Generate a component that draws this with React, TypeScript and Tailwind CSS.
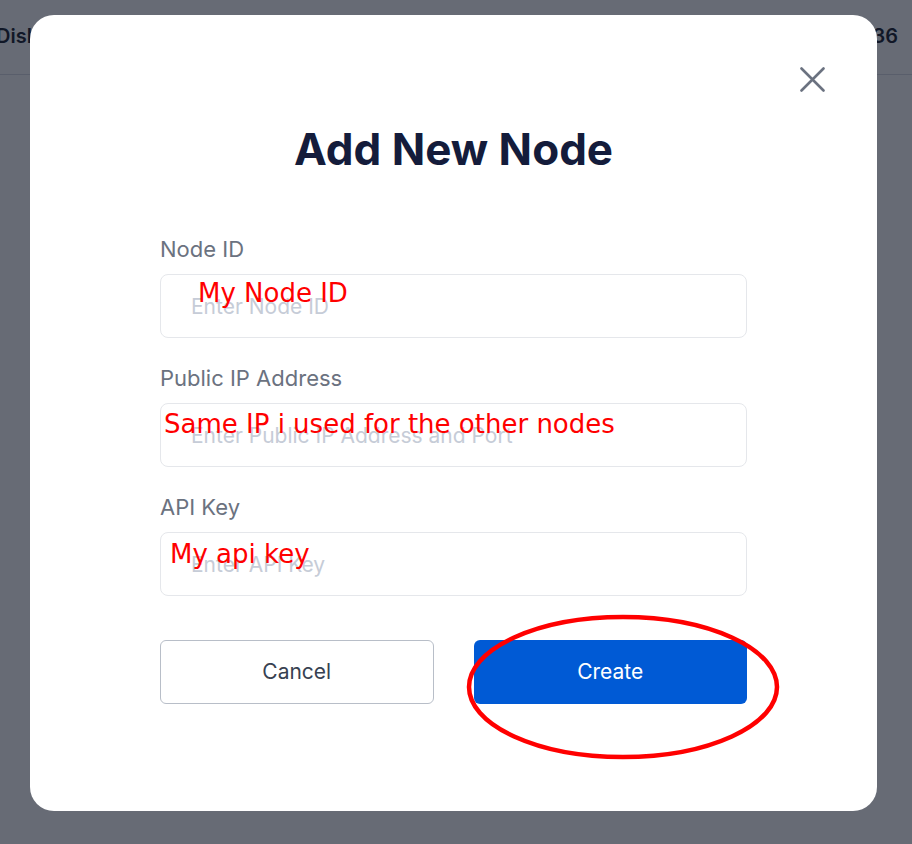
import React from 'react';

const inter = { fontFamily: 'Inter, "Noto Sans", sans-serif' };
const dejavu = { fontFamily: '"DejaVu Sans", sans-serif' };

interface FieldProps {
    label: string;
    placeholder: string;
    note: string;
    noteClass: string;
}

const Field: React.FC<FieldProps> = ({ label, placeholder, note, noteClass }) => {
    return (
        <div className="flex flex-col">
            <label className="text-[22px] leading-[28px] text-[#6b7280] mb-[11px]">{label}</label>
            <div className="relative">
                <input
                    type="text"
                    placeholder={placeholder}
                    className="w-full h-[64px] rounded-lg border border-[#e5e7eb] bg-white pl-[30px] text-[21px] text-gray-800 placeholder:text-[#c6ccd7] outline-none"
                />
                {/* red annotation typed over the field */}
                <span
                    className={`absolute pointer-events-none text-[26px] leading-none text-[#ff0000] whitespace-nowrap ${noteClass}`}
                    style={dejavu}
                >
                    {note}
                </span>
            </div>
        </div>
    );
};

export default function App() {
    return (
        <div className="relative w-[912px] h-[844px] overflow-hidden bg-white" style={inter}>
            {/* page behind the modal */}
            <div className="h-[75px] border-b border-[#d9dce2] flex items-center justify-between pb-[2px]">
                <span className="-ml-[4px] text-[20px] font-semibold text-[#111827]">Disk Usage</span>
                <span className="mr-[14px] text-[20px] font-semibold text-[#111827]">1236</span>
            </div>

            {/* backdrop */}
            <div className="absolute inset-0 bg-[#111827]/[0.64]">
                <div className="ml-[30px] mt-[15px] w-[847px] h-[796px] rounded-3xl bg-white relative flex flex-col items-center">
                    <button className="absolute top-[52px] right-[52px] w-[25px] h-[25px] text-[#6b7280]">
                        <svg viewBox="0 0 25 25" width="25" height="25" fill="none" stroke="currentColor" strokeWidth="2.6" strokeLinecap="round">
                            <path d="M1.5 1.5 L23.5 23.5 M23.5 1.5 L1.5 23.5" />
                        </svg>
                    </button>

                    <h2 className="mt-[108px] text-[44px] leading-[52px] font-bold text-[#141c3b]">Add New Node</h2>

                    <form className="w-[587px] mt-[60px] flex flex-col gap-[26px]">
                        <Field label="Node ID" placeholder="Enter Node ID" note="My Node ID" noteClass="top-[6px] left-[38px]" />
                        <Field
                            label="Public IP Address"
                            placeholder="Enter Public IP Address and Port"
                            note="Same IP i used for the other nodes"
                            noteClass="top-[8px] left-[4px]"
                        />
                        <Field label="API Key" placeholder="Enter API Key" note="My api key" noteClass="top-[9px] left-[10px]" />

                        <div className="mt-[18px] grid grid-cols-2 gap-[40px]">
                            <button type="button" className="h-[64px] rounded-md border border-[#b8bec8] bg-white text-[21px] text-[#374151]">
                                Cancel
                            </button>
                            <button type="button" className="h-[64px] rounded-md bg-[#005ad5] text-[21px] text-white">
                                Create
                            </button>
                        </div>
                    </form>
                </div>

                {/* red circle annotation */}
                <svg className="absolute left-0 top-0 pointer-events-none" width="912" height="844">
                    <ellipse cx="623" cy="687" rx="154" ry="70" fill="none" stroke="#ff0000" strokeWidth="4.5" />
                </svg>
            </div>
        </div>
    );
}
